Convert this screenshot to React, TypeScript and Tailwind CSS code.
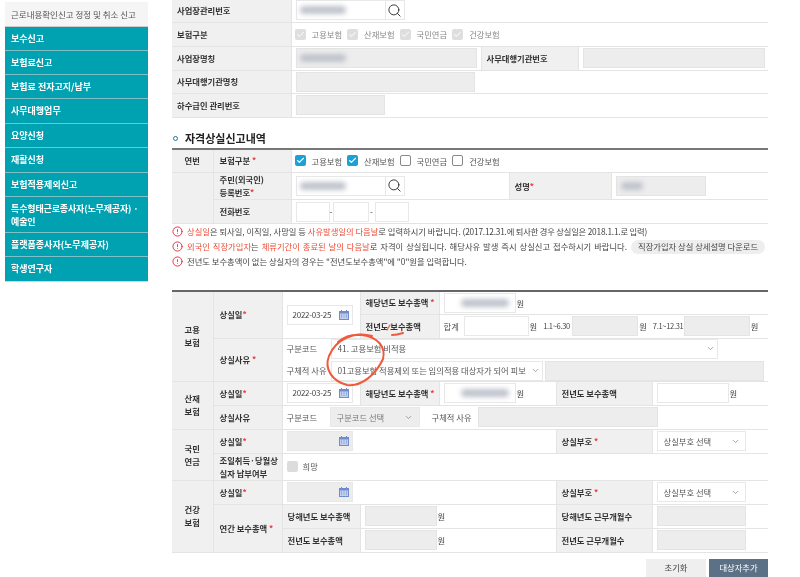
import React from "react";
import { ChevronDown, CircleAlert, Search, Check } from "lucide-react";

const Star = () => <span className="text-[#e8434f]">*</span>;

const Th = ({ children, className = "", ...p }: any) => (
  <td {...p} className={`bg-[#f0f0f0] border border-[#e4e4e4] pl-[5px] pr-0 font-semibold text-[#333] leading-[13px] whitespace-nowrap ${className}`}>
    {children}
  </td>
);
const Td = ({ children, className = "", ...p }: any) => (
  <td {...p} className={`border border-[#e4e4e4] px-[4px] text-[#444] ${className}`}>
    {children}
  </td>
);

const Gray = ({ className = "", children }: { className?: string; children?: any }) => (
  <div className={`h-[20px] bg-[#ededed] border border-[#e4e4e4] shrink-0 ${className}`}>{children}</div>
);
const Box = ({ className = "", children }: any) => (
  <div className={`h-[20px] bg-white border border-[#e8e8e8] shrink-0 flex items-center ${className}`}>{children}</div>
);
const Blur = ({ className = "" }: { className?: string }) => (
  <span className={`block h-[8px] rounded-sm bg-[#bfc3cc] blur-[2.5px] ${className}`} />
);

const Cb = ({ kind, label }: { kind: "on" | "off" | "dis"; label: string }) => (
  <span className="flex items-center gap-[6px] mr-[5px]">
    <span
      className={`w-[11px] h-[11px] rounded-[2px] flex items-center justify-center ${
        kind === "on" ? "bg-[#1ba1d6]" : kind === "dis" ? "bg-[#dedede]" : "bg-white border border-[#888]"
      }`}
    >
      {kind !== "off" && <Check size={9} strokeWidth={3} className={kind === "on" ? "text-white" : "text-[#f2f2f2]"} />}
    </span>
    <span className={kind === "dis" ? "text-[#888]" : "text-[#555]"}>{label}</span>
  </span>
);

const SearchInput = ({ w }: { w: string }) => (
  <div className="flex items-center h-[20px] -mt-px">
    <Box className={`${w} px-[3px] border-r-0`}>
      <Blur className="w-[46px]" />
    </Box>
    <Box className="w-[20px] justify-center">
      <Search size={15} strokeWidth={1.4} className="text-[#222]" />
    </Box>
  </div>
);

const Cal = () => (
  <svg width="10" height="10" viewBox="0 0 10 10" className="shrink-0">
    <rect x="0.5" y="1.5" width="9" height="8" fill="#c3d0ee" stroke="#6f8ccb" />
    <rect x="0.5" y="1.5" width="9" height="2" fill="#6f8ccb" />
    <rect x="2" y="0" width="1" height="2" fill="#6f8ccb" />
    <rect x="7" y="0" width="1" height="2" fill="#6f8ccb" />
    <path d="M2 5h1M4.5 5h1M7 5h1M2 7h1M4.5 7h1M7 7h1" stroke="#6f8ccb" strokeWidth="1" />
  </svg>
);

const DateBox = ({ value }: { value?: string }) => (
  <div
    className={`w-[66px] h-[20px] border border-[#e8e8e8] flex items-center justify-between pl-[5px] pr-[3px] text-[#444] text-[8px] tracking-[-0.25px] ${
      value ? "bg-white" : "bg-[#ededed]"
    }`}
  >
    <span>{value}</span>
    <Cal />
  </div>
);

const Sel = ({ text, className = "", gray = false }: { text: string; className?: string; gray?: boolean }) => (
  <div
    className={`h-[20px] border border-[#e8e8e8] flex items-center justify-between pl-[6px] pr-[2px] shrink-0 ${
      gray ? "bg-[#ededed] text-[#777]" : "bg-white text-[#555]"
    } ${className}`}
  >
    <span className="overflow-hidden whitespace-nowrap">{text}</span>
    <ChevronDown size={9} className="text-[#888] shrink-0 ml-[1px]" />
  </div>
);

const Won = () => <span className="text-[#444] shrink-0">원</span>;

const menu: [string, string][] = [
  ["보수신고", "h-[24px]"],
  ["보험료신고", "h-[24px]"],
  ["보험료 전자고지/납부", "h-[24px]"],
  ["사무대행업무", "h-[25px]"],
  ["요양신청", "h-[24px]"],
  ["재활신청", "h-[25px]"],
  ["보험적용제외신고", "h-[24px]"],
];

const Sidebar = () => (
  <aside className="w-[143px] ml-[5px] shrink-0 mt-[2px]">
    <div className="h-[25px] bg-[#f5f5f5] text-[#555] text-[8.5px] flex items-center pl-[6px] border-b border-[#ccc] whitespace-nowrap">
      근로내용확인신고 정정 및 취소 신고
    </div>
    {menu.map(([t, h]) => (
      <div key={t} className={`${h} bg-[#00a2b1] text-white text-[9px] font-semibold flex items-center pl-[6px] border-b border-[#7fbfc6]`}>
        {t}
      </div>
    ))}
    <div className="h-[36px] bg-[#00a2b1] text-white text-[9px] font-semibold flex items-center pl-[6px] leading-[13px] border-b border-[#7fbfc6] whitespace-nowrap tracking-[-0.15px]">
      <span>
        특수형태근로종사자(노무제공자) ·<br />
        예술인
      </span>
    </div>
    <div className="h-[24px] bg-[#00a2b1] text-white text-[9px] font-semibold flex items-center pl-[6px] border-b border-[#7fbfc6]">
      플랫폼종사자(노무제공자)
    </div>
    <div className="h-[25px] bg-[#00a2b1] text-white text-[9px] font-semibold flex items-center pl-[6px] border-b border-[#cfd8d9]">
      학생연구자
    </div>
  </aside>
);

const TopTable = () => (
  <table className="table-fixed border-collapse w-[596px] [&_td:last-child]:border-r-0 [&_td:first-child]:border-l-0">
    <colgroup>
      <col className="w-[119px]" />
      <col className="w-[190px]" />
      <col className="w-[97px]" />
      <col className="w-[190px]" />
    </colgroup>
    <tbody>
      <tr className="h-[22px]">
        <Th className="border-t-0">사업장관리번호</Th>
        <Td colSpan={3} className="border-t-0"><SearchInput w="w-[89px]" /></Td>
      </tr>
      <tr className="h-[24px]">
        <Th>보험구분</Th>
        <Td colSpan={3}>
          <div className="flex items-center -ml-[1px]">
            <Cb kind="dis" label="고용보험" />
            <Cb kind="dis" label="산재보험" />
            <Cb kind="dis" label="국민연금" />
            <Cb kind="dis" label="건강보험" />
          </div>
        </Td>
      </tr>
      <tr className="h-[24px]">
        <Th>사업장명칭</Th>
        <Td>
          <Gray className="w-[181px] flex items-center px-[3px]"><Blur className="w-[46px]" /></Gray>
        </Td>
        <Th>사무대행기관번호</Th>
        <Td><Gray className="w-[182px]" /></Td>
      </tr>
      <tr className="h-[23px]">
        <Th>사무대행기관명칭</Th>
        <Td colSpan={3}><Gray className="w-[179px]" /></Td>
      </tr>
      <tr className="h-[24px]">
        <Th>하수급인 관리번호</Th>
        <Td colSpan={3}><Gray className="w-[89px]" /></Td>
      </tr>
    </tbody>
  </table>
);

const MidTable = () => (
  <table className="table-fixed border-collapse w-[596px] border-t-2 border-t-[#777] [&_td:last-child]:border-r-0 [&_td:first-child]:border-l-0">
    <colgroup>
      <col className="w-[41px]" />
      <col className="w-[78px]" />
      <col className="w-[218px]" />
      <col className="w-[102px]" />
      <col className="w-[157px]" />
    </colgroup>
    <tbody>
      <tr className="h-[24px]">
        <Th className="text-center border-t-0 !pl-0">연번</Th>
        <Th className="border-t-0 pl-[6px]">보험구분 <Star /></Th>
        <Td colSpan={3} className="border-t-0">
          <div className="flex items-center -ml-[1px]">
            <Cb kind="on" label="고용보험" />
            <Cb kind="on" label="산재보험" />
            <Cb kind="off" label="국민연금" />
            <Cb kind="off" label="건강보험" />
          </div>
        </Td>
      </tr>
      <tr className="h-[26px]">
        <Th rowSpan={2}></Th>
        <Th className="pl-[6px]">주민(외국인)<br />등록번호<Star /></Th>
        <Td><SearchInput w="w-[89px]" /></Td>
        <Th>성명<Star /></Th>
        <Td>
          <Gray className="w-[90px] flex items-center px-[4px]"><Blur className="w-[22px]" /></Gray>
        </Td>
      </tr>
      <tr className="h-[24px]">
        <Th className="pl-[6px]">전화번호</Th>
        <Td colSpan={3}>
          <div className="flex items-center">
            <Box className="w-[34px]" />
            <span className="w-[3px] text-center">-</span>
            <Box className="w-[36px]" />
            <span className="w-[6px] text-center">-</span>
            <Box className="w-[34px]" />
          </div>
        </Td>
      </tr>
    </tbody>
  </table>
);

const Note = ({ children, extra }: any) => (
  <div className="flex items-center h-[15px] text-[#444] whitespace-nowrap">
    <CircleAlert size={11} strokeWidth={2} className="text-[#e6273c] mr-[4px] shrink-0" />
    <span className={extra ? "[word-spacing:1.1px]" : ""}>{children}</span>
    {extra}
  </div>
);
const R = ({ children }: any) => <span className="text-[#ef4a35]">{children}</span>;

const Notes = () => (
  <div>
    <Note>
      <R>상실일</R>은 퇴사일, 이직일, 사망일 등 <R>사유발생일의 다음날</R>로 입력하시기 바랍니다.{" "}
      <span className="tracking-[-0.2px]">(2017.12.31.에 퇴사한 경우 상실일은 2018.1.1.로 입력)</span>
    </Note>
    <Note
      extra={
        <span className="ml-[4px] h-[14px] px-[7px] rounded-full bg-[#eeeeee] flex items-center text-[#444]">직장가입자 상실 상세설명 다운로드</span>
      }
    >
      <R>외국인 직장가입자</R>는 <R>체류기간이 종료된 날의 다음날</R>로 자격이 상실됩니다. 해당사유 발생 즉시 상실신고 접수하시기 바랍니다.
    </Note>
    <Note>전년도 보수총액이 없는 상실자의 경우는 "전년도보수총액"에 "0"원을 입력합니다.</Note>
  </div>
);

const BottomTable = () => (
  <table className="table-fixed border-collapse w-[596px] border-t-2 border-t-[#666] [&_td:last-child]:border-r-0 [&_td:first-child]:border-l-0">
    <colgroup>
      <col className="w-[41px]" />
      <col className="w-[69px]" />
      <col className="w-[78px]" />
      <col className="w-[79px]" />
      <col className="w-[117px]" />
      <col className="w-[96px]" />
      <col className="w-[116px]" />
    </colgroup>
    <tbody>
      <tr className="h-[23px]">
        <Th rowSpan={3} className="text-center border-t-0 !pl-0">고용<br />보험</Th>
        <Th rowSpan={2} className="border-t-0 pl-[6px]">상실일<Star /></Th>
        <Td rowSpan={2} className="border-t-0"><DateBox value="2022-03-25" /></Td>
        <Th className="border-t-0">해당년도 보수총액 <Star /></Th>
        <Td colSpan={3} className="border-t-0">
          <div className="flex items-center gap-[1px]">
            <Box className="w-[72px] px-[6px]"><Blur className="w-[48px] ml-auto" /></Box>
            <Won />
          </div>
        </Td>
      </tr>
      <tr className="h-[24px]">
        <Th>전년도 보수총액</Th>
        <Td colSpan={3}>
          <div className="flex items-center">
            <span className="w-[20px] text-[#555]">합계</span>
            <Box className="w-[65px]" />
            <span className="ml-[1px]"><Won /></span>
            <span className="ml-[6px] w-[29px] text-[7.5px] whitespace-nowrap tracking-[-0.3px]">1.1~6.30</span>
            <Gray className="w-[66px]" />
            <span className="ml-[1px]"><Won /></span>
            <span className="ml-[6px] w-[31px] text-[7.5px] whitespace-nowrap tracking-[-0.3px]">7.1~12.31</span>
            <Gray className="w-[66px]" />
            <span className="ml-[1px]"><Won /></span>
          </div>
        </Td>
      </tr>
      <tr className="h-[43px]">
        <Th className="pl-[6px]">상실사유 <Star /></Th>
        <Td colSpan={5} className="pr-0">
          <div className="flex flex-col gap-[2px]">
            <div className="flex items-center">
              <span className="w-[44px] text-[#555]">구분코드</span>
              <Sel text="41. 고용보험 비적용" className="w-[387px] text-[#333]" />
            </div>
            <div className="flex items-center">
              <span className="w-[44px] text-[#555] whitespace-nowrap">구체적 사유</span>
              <Sel text="01고용보험 적용제외 또는 임의적용 대상자가 되어 피보" className="w-[212px] text-[#333]" />
              <Gray className="w-[219px] ml-[2px]" />
            </div>
          </div>
        </Td>
      </tr>
      <tr className="h-[24px]">
        <Th rowSpan={2} className="text-center !pl-0">산재<br />보험</Th>
        <Th className="pl-[6px]">상실일<Star /></Th>
        <Td><DateBox value="2022-03-25" /></Td>
        <Th>해당년도 보수총액 <Star /></Th>
        <Td>
          <div className="flex items-center gap-[1px]">
            <Box className="w-[72px] px-[6px]"><Blur className="w-[48px] ml-auto" /></Box>
            <Won />
          </div>
        </Td>
        <Th>전년도 보수총액</Th>
        <Td>
          <div className="flex items-center gap-[1px]">
            <Box className="w-[72px]" />
            <Won />
          </div>
        </Td>
      </tr>
      <tr className="h-[24px]">
        <Th className="pl-[6px]">상실사유</Th>
        <Td colSpan={5}>
          <div className="flex items-center">
            <span className="w-[43px] text-[#555]">구분코드</span>
            <Sel text="구분코드 선택" gray className="w-[90px] pr-[6px]" />
            <span className="ml-[12px] w-[43px] text-[#555] whitespace-nowrap">구체적 사유</span>
            <Gray className="w-[180px] ml-[3px]" />
          </div>
        </Td>
      </tr>
      <tr className="h-[24px]">
        <Th rowSpan={2} className="text-center !pl-0">국민<br />연금</Th>
        <Th className="pl-[6px]">상실일<Star /></Th>
        <Td colSpan={3}><DateBox /></Td>
        <Th>상실부호 <Star /></Th>
        <Td><Sel text="상실부호 선택" className="w-[89px] pr-[5px]" /></Td>
      </tr>
      <tr className="h-[25px]">
        <Th className="pl-[6px]">조일취득·당월상<br />실자 납부여부</Th>
        <Td colSpan={5}>
          <span className="flex items-center gap-[5px] text-[#555]">
            <span className="w-[11px] h-[11px] rounded-[2px] bg-[#dcdcdc]" />희망
          </span>
        </Td>
      </tr>
      <tr className="h-[24px]">
        <Th rowSpan={3} className="text-center !pl-0">건강<br />보험</Th>
        <Th className="pl-[6px]">상실일<Star /></Th>
        <Td colSpan={3}><DateBox /></Td>
        <Th>상실부호 <Star /></Th>
        <Td><Sel text="상실부호 선택" className="w-[89px] pr-[5px]" /></Td>
      </tr>
      <tr className="h-[24px]">
        <Th rowSpan={2} className="pl-[6px]">연간 보수총액 <Star /></Th>
        <Th>당해년도 보수총액</Th>
        <Td colSpan={2}>
          <div className="flex items-center gap-[1px]">
            <Gray className="w-[72px]" />
            <Won />
          </div>
        </Td>
        <Th>당해년도 근무개월수</Th>
        <Td><Gray className="w-[89px]" /></Td>
      </tr>
      <tr className="h-[24px]">
        <Th>전년도 보수총액</Th>
        <Td colSpan={2}>
          <div className="flex items-center gap-[1px]">
            <Gray className="w-[72px]" />
            <Won />
          </div>
        </Td>
        <Th>전년도 근무개월수</Th>
        <Td><Gray className="w-[89px]" /></Td>
      </tr>
    </tbody>
  </table>
);

export default function App() {
  return (
    <div className="relative w-[800px] h-[577px] overflow-hidden bg-white flex font-['Noto_Sans_CJK_KR','Liberation_Sans',sans-serif] text-[8.3px] blur-[0.35px]">
      <Sidebar />
      <main className="ml-[24px] w-[596px] shrink-0">
        <TopTable />
        <h2 className="mt-[12px] h-[17px] flex items-center text-[11px] font-bold text-[#222] whitespace-nowrap">
          <span className="w-[5px] h-[5px] rounded-full border-[1.5px] border-[#1a7aa0] mr-[7px] ml-[1px]" />
          자격상실신고내역
        </h2>
        <div className="h-[1px]" />
        <MidTable />
        <Notes />
        <div className="h-[21px]" />
        <BottomTable />
        <div className="flex justify-end gap-[3px] mt-[6px] leading-none">
          <div className="w-[60px] h-[18px] bg-[#efefef] text-[#444] flex items-center justify-center">초기화</div>
          <div className="w-[59px] h-[18px] bg-[#5d7186] text-white flex items-center justify-center">대상자추가</div>
        </div>
      </main>
      <svg className="absolute left-0 top-0 pointer-events-none" width="800" height="577" fill="none">
        <path
          d="M372 336C354 331 336 339 329 356C324 369 332 381 347 385C362 387 376 374 383 359C386 347 378 337 362 335C353 334 344 337 338 342"
          stroke="#ef5a3c"
          strokeWidth="2"
          strokeLinecap="round"
        />
        <path d="M392 335C396 335 400 334 403 333" stroke="#ef5a3c" strokeWidth="2" strokeLinecap="round" />
        <path d="M387 330L390 325" stroke="#ef5a3c" strokeWidth="1.2" strokeLinecap="round" />
      </svg>
    </div>
  );
}
